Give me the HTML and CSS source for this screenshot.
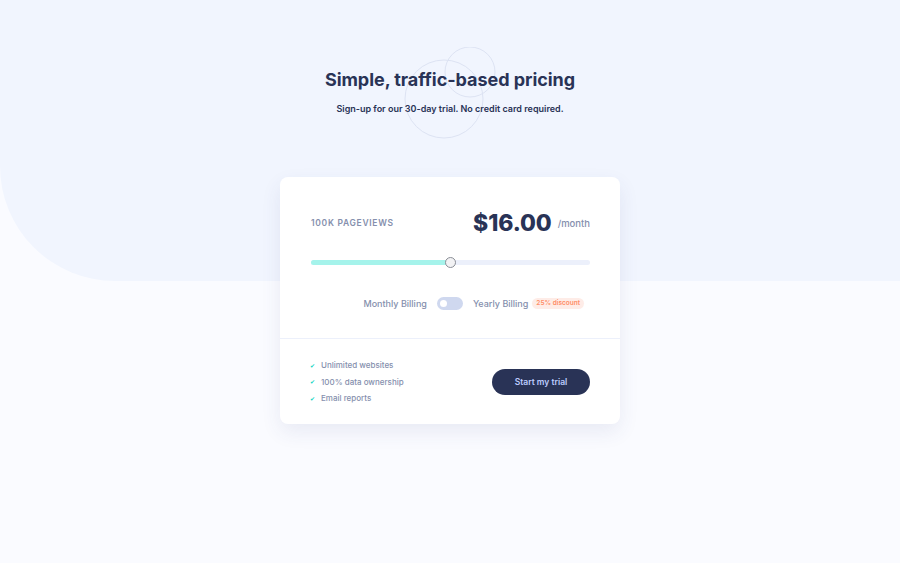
FILE: index.html
```html
<!DOCTYPE html>
<html>
<head>
<meta charset="utf-8">
<link rel="stylesheet" href="styles.css">
</head>
<body>
<div class="page">
  <div class="bg-shape"></div>
  <svg class="circles" width="120" height="110" viewBox="0 0 120 110">
    <circle cx="66" cy="25" r="25" fill="none" stroke="#dde3f3" stroke-width="1"/>
    <circle cx="40" cy="52" r="39" fill="none" stroke="#dde3f3" stroke-width="1"/>
  </svg>
  <header class="intro">
    <h1 class="title">Simple, traffic-based pricing</h1>
    <p class="subtitle">Sign-up for our 30-day trial. No credit card required.</p>
  </header>
  <section class="card">
    <div class="card-top">
      <div class="price-row">
        <span class="views">100K PAGEVIEWS</span>
        <span class="price"><strong class="amount">$16.00</strong><span class="per">/month</span></span>
      </div>
      <div class="slider">
        <div class="track"><div class="fill" style="width:50%"></div></div>
        <div class="thumb" style="left:50%"></div>
      </div>
      <div class="billing">
        <span class="bill-label">Monthly Billing</span>
        <span class="toggle"><span class="knob"></span></span>
        <span class="bill-label">Yearly Billing</span>
        <span class="badge">25% discount</span>
      </div>
    </div>
    <div class="card-bottom">
      <ul class="features">
        <li><span class="check">&#10004;</span>Unlimited websites</li>
        <li><span class="check">&#10004;</span>100% data ownership</li>
        <li><span class="check">&#10004;</span>Email reports</li>
      </ul>
      <button class="cta">Start my trial</button>
    </div>
  </section>
</div>
</body>
</html>
```
FILE: styles.css
```css
* { box-sizing: border-box; }
html, body { margin: 0; padding: 0; }
body {
  background: #fafbff;
  font-family: Inter, "Noto Sans", "Liberation Sans", sans-serif;
  width: 900px;
  height: 563px;
  overflow: hidden;
}
.page {
  position: relative;
  width: 900px;
  height: 563px;
  display: flex;
  flex-direction: column;
  align-items: center;
  padding-top: 69px;
}
.bg-shape {
  position: absolute;
  left: 0;
  top: 0;
  width: 900px;
  height: 281px;
  background: #f1f5fe;
  border-bottom-left-radius: 115px;
  z-index: 0;
}
.circles {
  position: absolute;
  left: 404px;
  top: 47px;
  z-index: 1;
}
.intro {
  position: relative;
  z-index: 2;
  text-align: center;
}
.title {
  margin: 0;
  font-size: 18px;
  line-height: 22px;
  font-weight: 700;
  color: #293356;
  letter-spacing: -0.05px;
}
.subtitle {
  margin: 12px 0 0;
  font-size: 9px;
  line-height: 12px;
  font-weight: 600;
  color: #293356;
}
.card {
  position: relative;
  z-index: 2;
  margin-top: 62px;
  width: 340px;
  background: #fff;
  border-radius: 8px;
  box-shadow: 0 8px 20px rgba(50, 70, 130, 0.09);
}
.card-top {
  padding: 31px 30px 28px 31px;
  border-bottom: 1px solid #ecf0fb;
}
.price-row {
  display: flex;
  justify-content: space-between;
  align-items: center;
  height: 30px;
}
.views {
  font-size: 8.5px;
  letter-spacing: 0.7px;
  font-weight: 600;
  color: #858fad;
}
.price { display: flex; align-items: center; gap: 6px; }
.amount {
  font-size: 23px;
  font-weight: 800;
  color: #293356;
  letter-spacing: -0.1px;
}
.per {
  font-size: 9.5px;
  color: #858fad;
  font-weight: 500;
}
.slider {
  position: relative;
  margin-top: 19px;
  height: 11px;
  display: flex;
  align-items: center;
}
.track {
  width: 100%;
  height: 5px;
  border-radius: 3px;
  background: #ecf0fb;
  overflow: hidden;
}
.fill { height: 100%; background: #a5f3eb; }
.thumb {
  position: absolute;
  top: 0;
  width: 11px;
  height: 11px;
  margin-left: -6px;
  border-radius: 50%;
  background: #f2f2f4;
  border: 1px solid #8a8e96;
}
.billing {
  margin-top: 29px;
  display: flex;
  align-items: center;
  justify-content: flex-end;
  padding-right: 6px;
  height: 13px;
}
.bill-label {
  font-size: 9px;
  font-weight: 500;
  color: #858fad;
}
.toggle {
  position: relative;
  width: 26px;
  height: 13px;
  border-radius: 7px;
  background: #cfd8ef;
  margin: 0 10px;
}
.knob {
  position: absolute;
  left: 3px;
  top: 3px;
  width: 7px;
  height: 7px;
  border-radius: 50%;
  background: #fff;
}
.badge {
  margin-left: 4px;
  padding: 1px 4px;
  border-radius: 6px;
  background: #feece7;
  color: #ff8c66;
  font-size: 6.5px;
  font-weight: 600;
  line-height: 9px;
}
.card-bottom {
  display: flex;
  justify-content: space-between;
  align-items: center;
  padding: 18px 30px 17px 30px;
}
.features {
  list-style: none;
  margin: 0;
  padding: 0;
}
.features li {
  display: flex;
  align-items: center;
  height: 16.5px;
  font-size: 8px;
  font-weight: 500;
  color: #858fad;
}
.check {
  color: #10d5c2;
  font-size: 6px;
  width: 11px;
}
.cta {
  width: 98px;
  height: 26px;
  border: 0;
  border-radius: 13px;
  background: #293356;
  color: #bdccff;
  font-family: inherit;
  font-size: 8.5px;
  font-weight: 600;
  margin-top: 1px;
}
```
